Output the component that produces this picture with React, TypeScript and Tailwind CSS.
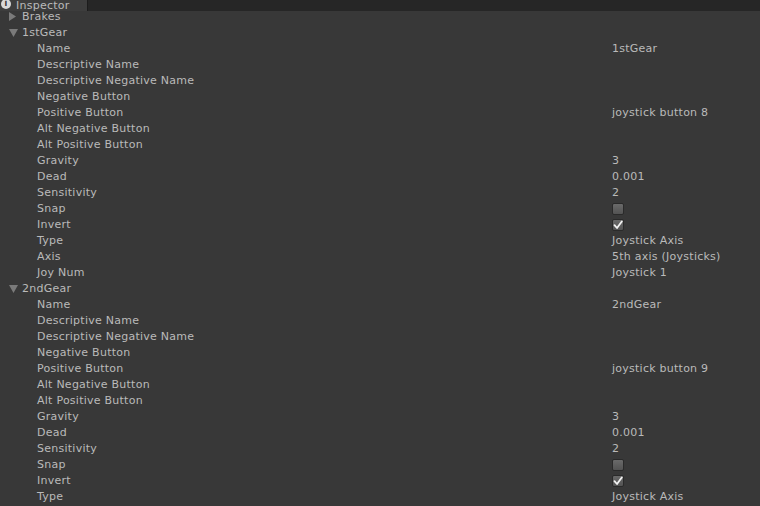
import React from "react";

type Field = { label: string; value?: string; check?: boolean };

const gearFields = (name: string, button: string): Field[] => [
  { label: "Name", value: name },
  { label: "Descriptive Name" },
  { label: "Descriptive Negative Name" },
  { label: "Negative Button" },
  { label: "Positive Button", value: button },
  { label: "Alt Negative Button" },
  { label: "Alt Positive Button" },
  { label: "Gravity", value: "3" },
  { label: "Dead", value: "0.001" },
  { label: "Sensitivity", value: "2" },
  { label: "Snap", check: false },
  { label: "Invert", check: true },
  { label: "Type", value: "Joystick Axis" },
  { label: "Axis", value: "5th axis (Joysticks)" },
  { label: "Joy Num", value: "Joystick 1" },
];

const Checkbox = ({ checked }: { checked: boolean }) => (
  <div className="w-[12px] h-[12px] rounded-[2px] border border-[#2a2a2a] bg-gradient-to-b from-[#6a6a6a] to-[#535353] flex items-center justify-center">
    {checked && (
      <svg width="10" height="10" viewBox="0 0 10 10">
        <path d="M1.5 5.2 L4 8 L8.8 1.5" stroke="#f2f2f2" strokeWidth="1.8" fill="none" strokeLinecap="round" strokeLinejoin="round" />
      </svg>
    )}
  </div>
);

const Foldout = ({ label, open }: { label: string; open: boolean }) => (
  <div className="h-4 flex items-center">
    <div className="w-[22px] flex items-center pl-[9px]">
      {open ? (
        <svg width="10" height="8" viewBox="0 0 10 8">
          <path d="M0 0 H9 L4.5 8 Z" fill="#7a7a7a" />
        </svg>
      ) : (
        <svg width="8" height="10" viewBox="0 0 8 10">
          <path d="M0 0 V9 L7 4.5 Z" fill="#7a7a7a" />
        </svg>
      )}
    </div>
    <span>{label}</span>
  </div>
);

const Row = ({ f }: { f: Field }) => (
  <div className="h-4 flex items-center">
    <span className="pl-[37px] w-[612px]">{f.label}</span>
    {f.check !== undefined ? <Checkbox checked={f.check} /> : <span>{f.value}</span>}
  </div>
);

export default function App() {
  const first = gearFields("1stGear", "joystick button 8");
  const second = gearFields("2ndGear", "joystick button 9").slice(0, 13);
  return (
    <div
      className="w-[760px] h-[506px] overflow-hidden bg-[#383838] text-[#bababa] text-[11px] leading-4 tracking-[0.25px]"
      style={{ fontFamily: '"DejaVu Sans", Verdana, sans-serif' }}
    >
      <div className="h-[11px] flex bg-[#262626]">
        <div className="w-[88px] h-full bg-[#3d3d3d] border-r border-[#1c1c1c] flex items-end overflow-hidden relative">
          <div className="absolute left-[1px] top-[-1px] w-[10px] h-[10px] rounded-full bg-[#d8d8d8] flex items-center justify-center">
            <span className="text-[8px] font-bold text-[#333] leading-none">i</span>
          </div>
          <span className="pl-[16px] leading-[11px]">Inspector</span>
        </div>
      </div>
      <div className="-mt-[2px]">
        <Foldout label="Brakes" open={false} />
        <Foldout label="1stGear" open />
        {first.map((f) => (
          <Row key={"a" + f.label} f={f} />
        ))}
        <Foldout label="2ndGear" open />
        {second.map((f) => (
          <Row key={"b" + f.label} f={f} />
        ))}
      </div>
    </div>
  );
}
